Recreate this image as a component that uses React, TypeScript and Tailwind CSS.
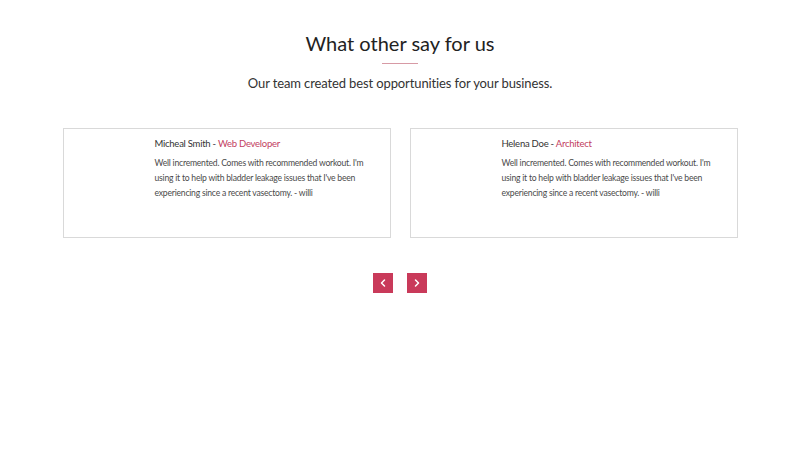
import { ChevronLeft, ChevronRight } from 'lucide-react';

type Testimonial = {
    name: string;
    role: string;
    quote: string;
};

const testimonials: Testimonial[] = [
    {
        name: 'Micheal Smith',
        role: 'Web Developer',
        quote: "Well incremented. Comes with recommended workout. I'm using it to help with bladder leakage issues that I've been experiencing since a recent vasectomy. - willi",
    },
    {
        name: 'Helena Doe',
        role: 'Architect',
        quote: "Well incremented. Comes with recommended workout. I'm using it to help with bladder leakage issues that I've been experiencing since a recent vasectomy. - willi",
    },
];

function TestimonialCard({ item }: { item: Testimonial }) {
    return (
        <div className="flex h-[110px] w-[328px] border border-[#d9d9d9] bg-white">
            {/* avatar slot, image not loaded */}
            <div className="w-[91px] shrink-0" />
            <div className="w-[222px] pt-[7px]">
                <p className="text-[9.5px] leading-[15px] tracking-[-0.25px] text-[#333]">
                    {item.name} - <span className="text-[#c2405f]">{item.role}</span>
                </p>
                <p className="mt-[5px] text-[8.6px] leading-[15px] tracking-[-0.22px] text-[#4a4a4a]">{item.quote}</p>
            </div>
        </div>
    );
}

export default function App() {
    return (
        <div className="h-[450px] w-[800px] bg-white font-['Lato',sans-serif]">
            <div className="flex flex-col items-center pt-[28px]">
                <h2 className="text-[20px] leading-[30px] font-normal text-[#222]">What other say for us</h2>
                <div className="mt-[5px] h-px w-[36px] bg-[#d79aa5]" />
                <p className="mt-[9px] text-[13px] leading-[20px] tracking-[-0.12px] text-[#333]">
                    Our team created best opportunities for your business.
                </p>
            </div>

            <div className="mt-[35px] flex justify-center gap-[19px]">
                {testimonials.map((t) => (
                    <TestimonialCard key={t.name} item={t} />
                ))}
            </div>

            <div className="mt-[35px] flex justify-center gap-[14px]">
                <button className="flex h-[20px] w-[20px] items-center justify-center bg-[#c93a5a] text-white">
                    <ChevronLeft size={12} strokeWidth={3} />
                </button>
                <button className="flex h-[20px] w-[20px] items-center justify-center bg-[#c93a5a] text-white">
                    <ChevronRight size={12} strokeWidth={3} />
                </button>
            </div>
        </div>
    );
}
